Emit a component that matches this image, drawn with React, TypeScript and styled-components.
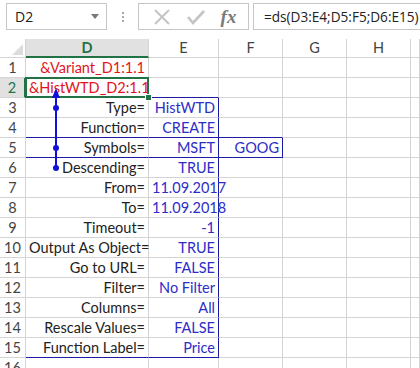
import React from "react";
import styled, { createGlobalStyle } from "styled-components";

const GlobalStyle = createGlobalStyle`
  html, body {
    margin: 0;
    padding: 0;
    background: #ffffff;
    overflow: hidden;
  }
  body {
    font-family: "Lato", "Liberation Sans", sans-serif;
  }
`;

const COLS = ["D", "E", "F", "G", "H", ""];

type Row = {
  n: number;
  d?: string;
  e?: string;
  f?: string;
  red?: boolean;
};

const rows: Row[] = [
  { n: 1, d: "&Variant_D1:1.1", red: true },
  { n: 2, d: "&HistWTD_D2:1.1", red: true },
  { n: 3, d: "Type=", e: "HistWTD" },
  { n: 4, d: "Function=", e: "CREATE" },
  { n: 5, d: "Symbols=", e: "MSFT", f: "GOOG" },
  { n: 6, d: "Descending=", e: "TRUE" },
  { n: 7, d: "From=", e: "11.09.2017" },
  { n: 8, d: "To=", e: "11.09.2018" },
  { n: 9, d: "Timeout=", e: "-1" },
  { n: 10, d: "Output As Object=", e: "TRUE" },
  { n: 11, d: "Go to URL=", e: "FALSE" },
  { n: 12, d: "Filter=", e: "No Filter" },
  { n: 13, d: "Columns=", e: "All" },
  { n: 14, d: "Rescale Values=", e: "FALSE" },
  { n: 15, d: "Function Label=", e: "Price" },
  { n: 16 },
];

// blue range borders for D3:E4, D5:F5, D6:E15 (col 0 = D)
const blueBottom = (r: number, c: number) =>
  (r === 2 && c <= 1) ||
  ((r === 4 || r === 5) && c <= 2) ||
  (r === 15 && c <= 1);

const blueRight = (r: number, c: number) =>
  (c === 1 && r >= 3 && r <= 15) || (c === 2 && r === 5);

export default function App() {
  return (
    <>
      <GlobalStyle />
      <FormulaBar>
        <NameBox>
          <span>D2</span>
          <Caret />
        </NameBox>
        <Grip>
          <i />
          <i />
          <i />
        </Grip>
        <ButtonBox>
          <svg width="18" height="18" viewBox="0 0 18 18">
            <path d="M2 2 L16 16 M16 2 L2 16" stroke="#c4c4c4" strokeWidth="2" />
          </svg>
          <svg width="20" height="18" viewBox="0 0 20 18">
            <path d="M2 9 L7 15 L18 3" stroke="#c4c4c4" strokeWidth="2.6" fill="none" />
          </svg>
          <Fx>fx</Fx>
        </ButtonBox>
        <FormulaBox>=ds(D3:E4;D5:F5;D6:E15)</FormulaBox>
      </FormulaBar>

      <Sheet>
        <Corner />
        {COLS.map((c, i) => (
          <ColHeader key={i} $active={c === "D"}>
            {c}
          </ColHeader>
        ))}
        {rows.map((row) => (
          <React.Fragment key={row.n}>
            <RowHeader $active={row.n === 2}>{row.n}</RowHeader>
            {[row.d, row.e, row.f, "", "", ""].map((v, c) => (
              <Cell
                key={c}
                $red={row.red}
                $blue={c > 0}
                $bb={blueBottom(row.n, c)}
                $br={blueRight(row.n, c)}
                $selected={row.n === 2 && c === 0}
              >
                {v}
              </Cell>
            ))}
          </React.Fragment>
        ))}
        <Trace width="420" height="330" viewBox="0 0 420 330">
          <line x1="56" y1="56" x2="56" y2="129" stroke="#1010d8" strokeWidth="2" />
          <path d="M56 49 L52 59 L60 59 Z" fill="#1010d8" />
          <circle cx="56" cy="69" r="3" fill="#1010d8" />
          <circle cx="56" cy="109" r="3" fill="#1010d8" />
          <circle cx="56" cy="129" r="3" fill="#1010d8" />
        </Trace>
      </Sheet>
    </>
  );
}

const FormulaBar = styled.div`
  display: flex;
  align-items: flex-start;
  height: 39px;
  padding-top: 3px;
  box-sizing: border-box;
  font-family: "Open Sans", "Liberation Sans", sans-serif;
`;

const NameBox = styled.div`
  margin-left: 6px;
  width: 101px;
  height: 27px;
  border: 1px solid #c6c6c6;
  box-sizing: border-box;
  display: flex;
  align-items: center;
  justify-content: space-between;
  padding: 0 7px 0 8px;
  font-size: 14px;
  color: #222;
`;

const Caret = styled.div`
  width: 0;
  height: 0;
  border-left: 4px solid transparent;
  border-right: 4px solid transparent;
  border-top: 5px solid #777;
`;

const Grip = styled.div`
  width: 31px;
  height: 27px;
  display: flex;
  flex-direction: column;
  align-items: center;
  justify-content: center;
  gap: 2px;
  i {
    width: 2px;
    height: 2px;
    background: #aaa;
  }
`;

const ButtonBox = styled.div`
  width: 111px;
  height: 27px;
  border: 1px solid #c6c6c6;
  box-sizing: border-box;
  display: flex;
  align-items: center;
  justify-content: space-around;
  padding: 0 4px 0 6px;
`;

const Fx = styled.span`
  font-family: "Liberation Serif", serif;
  font-style: italic;
  font-weight: bold;
  font-size: 19px;
  color: #7a7a7a;
`;

const FormulaBox = styled.div`
  margin-left: 4px;
  flex: 1;
  height: 27px;
  border: 1px solid #c6c6c6;
  border-right: none;
  box-sizing: border-box;
  padding-left: 10px;
  line-height: 25px;
  font-size: 13.6px;
  color: #222;
  white-space: nowrap;
`;

const Sheet = styled.div`
  position: relative;
  display: grid;
  grid-template-columns: 26px 123px 70px 64px 64px 64px 1fr;
  grid-template-rows: 19px;
  grid-auto-rows: 20px;
  font-size: 14.5px;
`;

const Corner = styled.div`
  position: relative;
  border-right: 1px solid #d4d4d4;
  border-bottom: 1px solid #d4d4d4;
  box-sizing: border-box;
  &::after {
    content: "";
    position: absolute;
    right: 2px;
    bottom: 2px;
    width: 0;
    height: 0;
    border-left: 11px solid transparent;
    border-bottom: 11px solid #dcdcdc;
  }
`;

const ColHeader = styled.div<{ $active?: boolean }>`
  box-sizing: border-box;
  border-right: 1px solid #d4d4d4;
  border-bottom: ${(p) => (p.$active ? "2px solid #217346" : "1px solid #d4d4d4")};
  background: ${(p) => (p.$active ? "#e1e1e1" : "#ffffff")};
  color: ${(p) => (p.$active ? "#217346" : "#444")};
  font-weight: ${(p) => (p.$active ? "bold" : "normal")};
  text-align: center;
  line-height: 18px;
`;

const RowHeader = styled.div<{ $active?: boolean }>`
  box-sizing: border-box;
  border-right: ${(p) => (p.$active ? "2px solid #217346" : "1px solid #d4d4d4")};
  border-bottom: 1px solid #d4d4d4;
  background: ${(p) => (p.$active ? "#e1e1e1" : "#ffffff")};
  color: ${(p) => (p.$active ? "#217346" : "#444")};
  text-align: center;
  line-height: 19px;
`;

const Cell = styled.div<{
  $red?: boolean;
  $blue?: boolean;
  $bb?: boolean;
  $br?: boolean;
  $selected?: boolean;
}>`
  position: relative;
  box-sizing: border-box;
  border-right: 1px solid ${(p) => (p.$br ? "#1c1ca6" : "#d4d4d4")};
  border-bottom: 1px solid ${(p) => (p.$bb ? "#1c1ca6" : "#d4d4d4")};
  padding: 0 3px;
  line-height: 20px;
  text-align: right;
  white-space: nowrap;
  color: ${(p) => (p.$red ? "#e3131b" : p.$blue ? "#2d2dc8" : "#222")};
  direction: rtl;
  unicode-bidi: plaintext;

  ${(p) =>
    p.$selected &&
    `
    &::before {
      content: "";
      position: absolute;
      left: -1px;
      top: -1px;
      right: -1px;
      bottom: -1px;
      border: 2px solid #217346;
      z-index: 2;
    }
    &::after {
      content: "";
      position: absolute;
      right: -4px;
      bottom: -4px;
      width: 5px;
      height: 5px;
      background: #217346;
      border: 1px solid #fff;
      z-index: 3;
    }
  `}
`;

const Trace = styled.svg`
  position: absolute;
  left: 0;
  top: 0;
  pointer-events: none;
  z-index: 4;
`;
